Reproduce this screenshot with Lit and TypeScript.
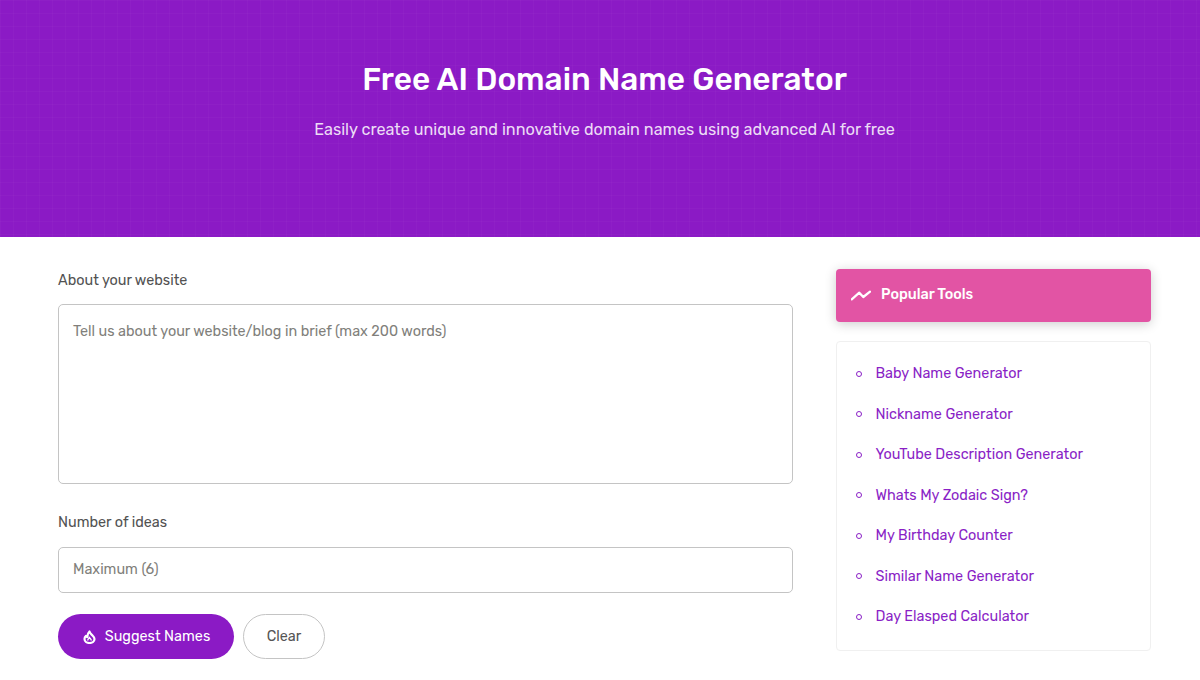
import { LitElement, html, css } from "lit";
import { customElement } from "lit/decorators.js";

const tools = ["Baby Name Generator","Nickname Generator","YouTube Description Generator","Whats My Zodaic Sign?","My Birthday Counter","Similar Name Generator","Day Elasped Calculator"];

@customElement("app-root")
export class AppRoot extends LitElement {
  static styles = css`
    :host { display:block; height:680px; overflow:hidden; background:#fff; font-family:Rubik,"Inter","Noto Sans",sans-serif; }
    .hero { height:237px; box-sizing:border-box; background-color:#8b1ac5; background-image:linear-gradient(rgba(255,255,255,.022) 1px,transparent 1px),linear-gradient(90deg,rgba(255,255,255,.022) 1px,transparent 1px); background-size:13px 13px; text-align:center; color:#fff; padding:60px 0 0 9px; }
    h1 { margin:0; font-size:31.6px; line-height:38px; font-weight:500; }
    .hero p { margin:20px 0 0; font-size:16.2px; line-height:24px; color:#ecdcf5; }
    .main { display:flex; padding:32px 49px 0 58px; justify-content:space-between; }
    .form { width:735px; padding-top:1px; }
    label { display:block; font-size:14.4px; line-height:22px; color:#525252; margin-bottom:13px; }
    label.first { margin-bottom:12px; }
    .field { box-sizing:border-box; width:100%; border:1px solid #c4c4c4; border-radius:5px; padding:0 14px; font-size:14.4px; color:#817f7b; }
    .area { height:180px; padding-top:17px; line-height:20px; margin-bottom:28px; }
    .input { height:46px; line-height:44px; }
    .btns { display:flex; gap:9px; margin-top:21px; }
    .btn { display:flex; align-items:center; justify-content:center; height:45px; border-radius:23px; font-size:14.4px; box-sizing:border-box; }
    .go { width:176px; background:#8b1ac5; color:#fff; gap:9px; padding-left:1px; }
    .clear { width:82px; border:1px solid #c4c4c4; color:#555; }
    aside { width:315px; }
    .pop { display:flex; align-items:center; gap:10px; height:53px; padding:0 0 2px 15px; box-sizing:border-box; background:#e254a4; color:#fff; border-radius:4px; font-size:14.4px; font-weight:500; box-shadow:0 2px 12px rgba(0,0,0,.2); }
    ul { list-style:none; margin:19px 0 0; padding:11.300px 19px 13px; border:1px solid #f0f0f0; border-radius:4px; }
    li { display:flex; align-items:center; height:40.5px; font-size:14.4px; color:#8a1fc6; }
    li i { width:4px; height:4px; border:1px solid #8a1fc6; border-radius:50%; margin-right:13.500px; }
  `;
  render() {
    return html`
      <section class="hero"><h1>Free AI Domain Name Generator</h1><p>Easily create unique and innovative domain names using advanced AI for free</p></section>
      <div class="main">
        <div class="form">
          <label class="first">About your website</label>
          <div class="field area">Tell us about your website/blog in brief (max 200 words)</div>
          <label>Number of ideas</label>
          <div class="field input">Maximum (6)</div>
          <div class="btns">
            <div class="btn go"><svg width="13" height="14" viewBox="0 0 13 14" fill="none" stroke="#fff"><path stroke-width="2.200" stroke-linejoin="round" d="M6.500 1.500C7 3.500 8 4 9.500 5.500 11 7 11.500 8 11.500 9a5 4 0 0 1-10 0c0-1.500.7-2.500 1.500-3.200.3.800.8 1.200 1.500 1.300C4.300 5 5 3 6.500 1.500z"/><path stroke-width="1.400" d="M4.700 10.500c0-1.200 1-1.700 1.800-3 .8 1.300 1.800 1.800 1.800 3"/></svg>Suggest Names</div>
            <div class="btn clear">Clear</div>
          </div>
        </div>
        <aside>
          <div class="pop"><svg width="20" height="12" viewBox="0 0 20 12" fill="none" stroke="#fff" stroke-width="2.300" stroke-linecap="round" stroke-linejoin="round"><path d="M.700 10.300 8.300 3.700 12.300 8 19 2.700"/></svg>Popular Tools</div>
          <ul>${tools.map(t => html`<li><i></i>${t}</li>`)}</ul>
        </aside>
      </div>`;
  }
}
